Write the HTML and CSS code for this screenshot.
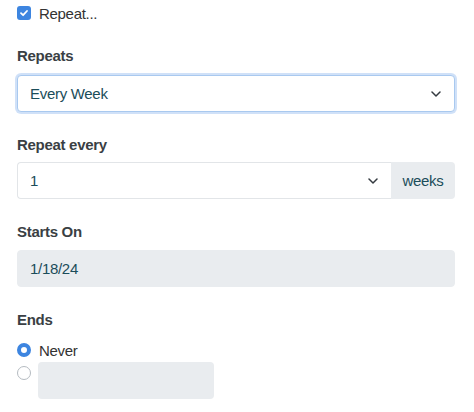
FILE: index.html
```html
<!DOCTYPE html>
<html lang="en">
<head>
<meta charset="utf-8">
<title>Repeat</title>
<link rel="stylesheet" href="styles.css">
</head>
<body>
<div class="form">
  <label class="check-row">
    <span class="checkbox"><svg width="10" height="10" viewBox="0 0 10 10"><path d="M2 5.2 L4.1 7.2 L8 3" fill="none" stroke="#fff" stroke-width="1.8" stroke-linecap="round" stroke-linejoin="round"/></svg></span>
    <span class="check-text">Repeat...</span>
  </label>

  <div class="group">
    <div class="label">Repeats</div>
    <div class="control select focused">
      <span class="value">Every Week</span>
      <svg class="chev" width="10" height="6" viewBox="0 0 10 6"><path d="M1 1 L5 5 L9 1" fill="none" stroke="#343a40" stroke-width="1.5" stroke-linecap="round" stroke-linejoin="round"/></svg>
    </div>
  </div>

  <div class="group">
    <div class="label">Repeat every</div>
    <div class="input-group">
      <div class="control select grouped">
        <span class="value">1</span>
        <svg class="chev" width="10" height="6" viewBox="0 0 10 6"><path d="M1 1 L5 5 L9 1" fill="none" stroke="#343a40" stroke-width="1.5" stroke-linecap="round" stroke-linejoin="round"/></svg>
      </div>
      <div class="addon">weeks</div>
    </div>
  </div>

  <div class="group">
    <div class="label">Starts On</div>
    <div class="control disabled"><span class="value">1/18/24</span></div>
  </div>

  <div class="group">
    <div class="label">Ends</div>
    <div class="radio-row">
      <span class="radio checked"></span>
      <span class="radio-text">Never</span>
    </div>
    <div class="radio-row second">
      <span class="radio"></span>
      <div class="small-input"></div>
    </div>
  </div>
</div>
</body>
</html>
```

FILE: styles.css
```css
* { box-sizing: border-box; }
html, body { margin: 0; padding: 0; background: #fff; }
body {
  font-family: "Liberation Sans", Arial, sans-serif;
  font-size: 15px;
  letter-spacing: -0.3px;
  color: #343a40;
}
.form {
  width: 438px;
  margin-left: 17px;
  padding-top: 2px;
}
.check-row {
  display: flex;
  align-items: center;
  height: 22px;
  gap: 8px;
}
.checkbox {
  width: 14px;
  height: 14px;
  border-radius: 3px;
  background: #3d85e0;
  display: flex;
  align-items: center;
  justify-content: center;
}
.check-text { color: #333; }
.group { margin-top: 21px; }
.group + .group { margin-top: 22px; }
.label {
  font-weight: 700;
  line-height: 22px;
  height: 22px;
  color: #3a3f44;
  margin-bottom: 8px;
}
.group:nth-child(3) .label { margin-bottom: 6px; }
.group:nth-child(4) .label { margin-bottom: 7px; }
.control {
  height: 37px;
  border: 1px solid #e2e5e8;
  border-radius: 4px;
  display: flex;
  align-items: center;
  padding: 0 12px;
  color: #1b4d5a;
  background: #fff;
}
.control.select { justify-content: space-between; }
.control.focused {
  border-color: #a9c9ef;
  box-shadow: 0 0 0 2px rgba(120, 170, 235, 0.35);
}
.chev { margin-right: 1px; }
.input-group { display: flex; }
.control.grouped {
  flex: 0 0 374px;
  border-radius: 4px 0 0 4px;
  border-right: none;
}
.addon {
  flex: 1;
  height: 37px;
  background: #e9ecef;
  border-radius: 0 4px 4px 0;
  color: #1b4d5a;
  display: flex;
  align-items: center;
  justify-content: center;
}
.control.disabled {
  background: #e9ecef;
  border-color: #e9ecef;
}
.radio-row {
  display: flex;
  align-items: center;
  gap: 8px;
  height: 22px;
  margin-top: 5px;
}
.radio-row.second {
  align-items: flex-start;
  height: auto;
  margin-top: 1px;
  gap: 7px;
}
.radio {
  width: 14px;
  height: 14px;
  border-radius: 50%;
  border: 1px solid #b5bbc1;
  background: #fff;
  flex: 0 0 14px;
}
.radio.checked {
  border: 4.5px solid #3d85e0;
}
.radio-row.second .radio { margin-top: 4px; }
.radio-text { color: #333; }
.small-input {
  width: 176px;
  height: 37px;
  background: #e9ecef;
  border-radius: 4px;
}
```
